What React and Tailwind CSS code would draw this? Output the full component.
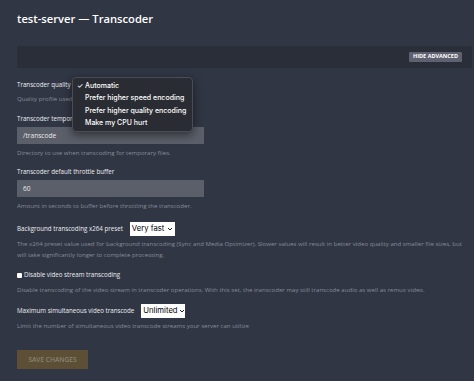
import React from "react";

function FakeSelect({ value, w }) {
  return (
    <div
      className={`flex h-[14px] items-center justify-between whitespace-nowrap bg-white pl-[2px] pr-[2px] text-[7.7px] leading-none text-black ${w}`}
      style={{ fontFamily: "Inter, 'Noto Sans', sans-serif" }}
    >
      <span>{value}</span>
      <svg width="6" height="4" viewBox="0 0 6 4" className="ml-[1px] shrink-0">
        <path d="M1 1 L3 3 L5 1" stroke="#222" strokeWidth="1" fill="none" />
      </svg>
    </div>
  );
}

const label = "text-[6.2px] font-medium leading-[10px] text-[#eceef1]";
const desc = "text-[6.1px] leading-[10px] text-[#868c99]";

export default function App() {
  return (
    <div
      className="relative min-h-[381px] w-[474px] overflow-hidden bg-[#313644] pl-[17px] pr-[2px] pt-[12px] text-[#e6e7ea]"
      style={{ fontFamily: "'Open Sans', 'Liberation Sans', sans-serif" }}
    >
      <h1 className="text-[11.2px] font-semibold leading-[14px] text-white">
        test-server — Transcoder
      </h1>

      <div className="mt-[20px] flex h-[22px] items-center justify-end bg-[#2a2e39] pr-[10px]">
        <div className="flex h-[10px] items-center rounded-[1px] bg-[#5d6170] px-[4px] text-[5.5px] font-bold uppercase leading-none text-white">
          Hide advanced
        </div>
      </div>

      <div className={`mt-[12px] ${label}`}>Transcoder quality</div>
      <div className={`mt-[4px] ${desc}`}>Quality profile used for the transcoder.</div>

      <div className={`mt-[10px] ${label}`}>Transcoder temporary directory</div>
      <div className="mt-[3px] flex h-[17px] w-[187px] items-center bg-[#5b5f69] pl-[6px] text-[6.6px] text-[#e8e8ea]">
        /transcode
      </div>
      <div className={`mt-[4px] ${desc}`}>Directory to use when transcoding for temporary files.</div>

      <div className={`mt-[9px] ${label}`}>Transcoder default throttle buffer</div>
      <div className="mt-[3px] flex h-[17px] w-[187px] items-center bg-[#5b5f69] pl-[6px] text-[6.6px] text-[#e8e8ea]">
        60
      </div>
      <div className={`mt-[4px] ${desc}`}>Amount in seconds to buffer before throttling the transcoder.</div>

      <div className="mt-[11px] flex h-[14px] items-center">
        <span className="text-[6.2px] font-medium text-[#eceef1]">Background transcoding x264 preset</span>
        <div className="ml-[7px]">
          <FakeSelect value="Very fast" w="w-[45px]" />
        </div>
      </div>
      <div className="mt-[2px] pr-[8px] text-[6.1px] leading-[11px] text-[#868c99]">
        The x264 preset value used for background transcoding (Sync and Media Optimizer). Slower values will result in better video quality and smaller file sizes, but will take significantly longer to complete processing.
      </div>

      <div className="mt-[10px] flex items-center">
        <div className="h-[5px] w-[5px] rounded-[1px] bg-white" />
        <span className="ml-[2px] text-[6.2px] font-medium leading-[10px] text-[#eceef1]">Disable video stream transcoding</span>
      </div>
      <div className={`mt-[5px] ${desc}`}>
        Disable transcoding of the video stream in transcoder operations. With this set, the transcoder may still transcode audio as well as remux video.
      </div>

      <div className="mt-[9px] flex h-[14px] items-center">
        <span className="text-[6.2px] font-medium text-[#eceef1]">Maximum simultaneous video transcode</span>
        <div className="ml-[7px]">
          <FakeSelect value="Unlimited" w="w-[44px]" />
        </div>
      </div>
      <div className={`mt-[3px] ${desc}`}>
        Limit the number of simultaneous video transcode streams your server can utilize
      </div>

      <div className="mt-[19px] flex h-[19px] w-[71px] items-center justify-center bg-[#5c4f35] text-[6.6px] font-semibold uppercase text-[#8a8475]">
        Save changes
      </div>

      <div
        className="absolute left-[72px] top-[77px] w-[121px] whitespace-nowrap rounded-[4px] border border-[#4a4d55] bg-[#2a2c33] py-[2px] text-[7px] font-medium leading-[12.3px] text-white shadow-[0_3px_10px_rgba(0,0,0,0.5)]"
        style={{ fontFamily: "Inter, 'Noto Sans', sans-serif" }}
      >
        <div className="relative pl-[12px]">
          <span className="absolute left-[4px]">✓</span>Automatic
        </div>
        <div className="pl-[12px]">Prefer higher speed encoding</div>
        <div className="pl-[12px]">Prefer higher quality encoding</div>
        <div className="pl-[12px]">Make my CPU hurt</div>
      </div>
    </div>
  );
}
